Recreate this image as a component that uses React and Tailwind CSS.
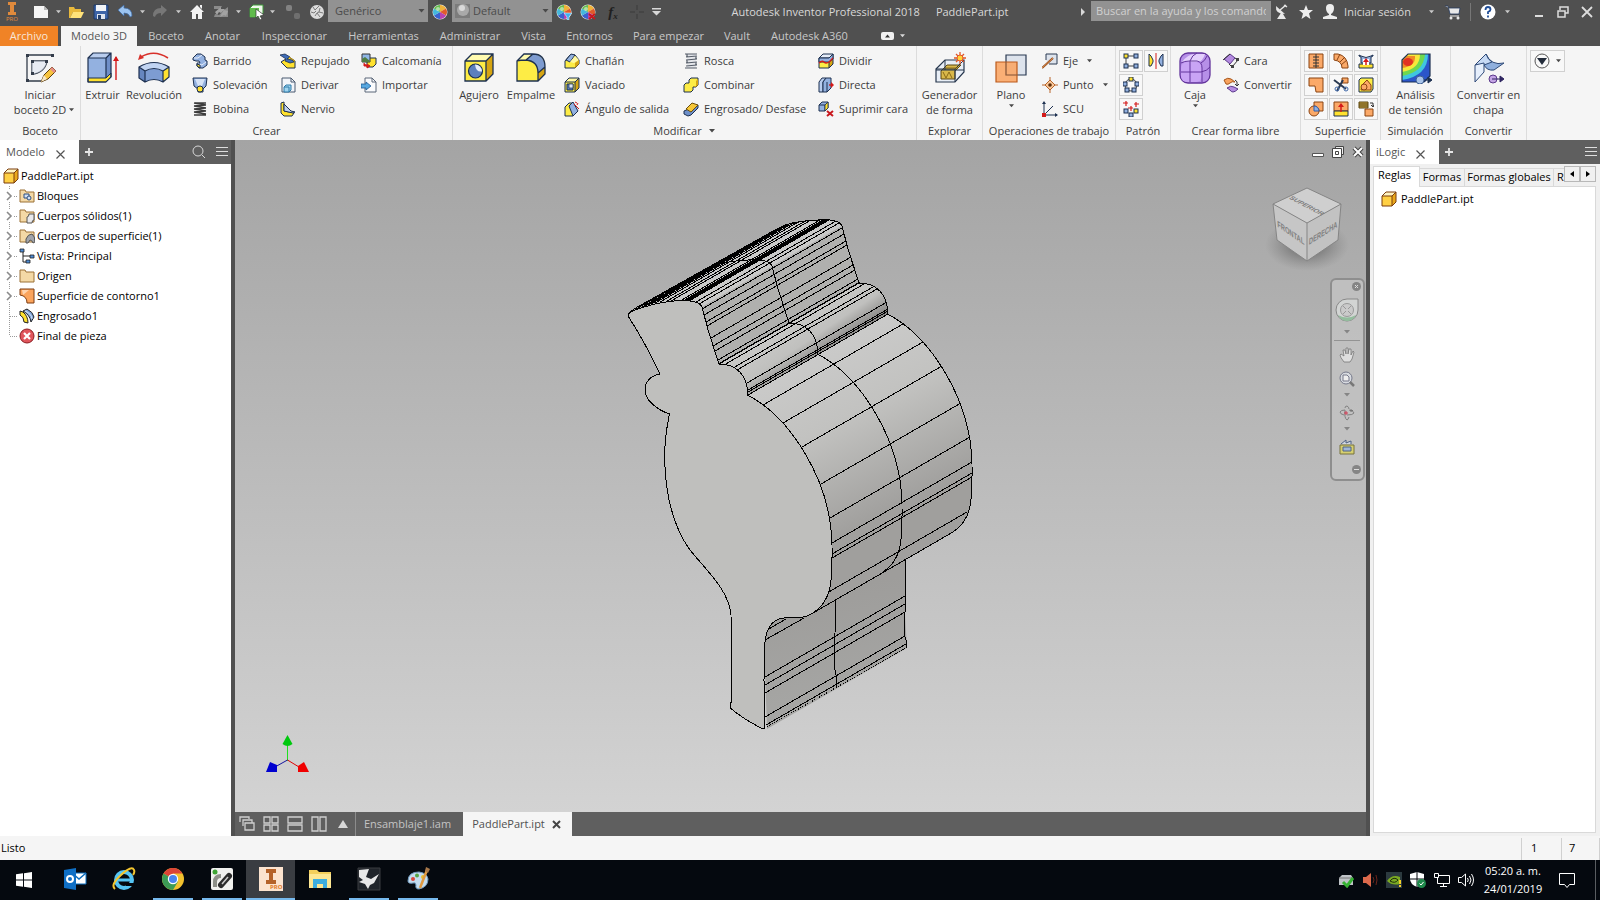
const NAVY = "#1d3050";
const BLUE = "#93b1e0";
const YEL = "#ffe12e";
const ORG = "#fba968";
const BRN = "#8a4413";

const Svg = ({ s = 16, w, h, vb, children, className = "" }) => (
    <svg width={w || s} height={h || s} viewBox={vb || `0 0 ${w || s} ${h || s}`} fill="none" className={`block shrink-0 ${className}`} aria-hidden="true">
        {children}
    </svg>
);

const Caret = ({ color = "#4a4a4a", w = 6 }) => (
    <Svg w={w} h={4} vb="0 0 6 4">
        <path d="M0 0h6L3 3.6z" fill={color} />
    </Svg>
);

/* ---------- ribbon icons, 32px ---------- */
const big = {
    sketch: (
        <Svg s={32}>
            <path d="M3 3h26M3 3v26M3 29h16" stroke="#333c4a" strokeWidth="1.3" />
            <path d="M8 9h15M8 9v13c7 0 14-5 15-13" stroke="#333c4a" strokeWidth="1.3" />
            <path d="M8 22c7 0 14-5 15-13H8z" fill="#dfe6f1" opacity=".6" />
            <path d="M2 2h3v3H2zM27 2h3v3h-3zM2 27h3v3H2zM7 8h3v3H7zM21 8h3v3h-3zM7 20h3v3H7z" fill="#333c4a" />
            <path d="M17 30l3-7 8-8 4 4-8 8z" fill="#f7c33d" stroke="#5a3c10" />
            <path d="M17 30l3-7 3 4z" fill="#f7e6c4" />
            <path d="M26 17l4 4 2-2-4-4z" fill="#e58e86" />
        </Svg>
    ),
    extrude: (
        <Svg s={32}>
            <path d="M1 6l5-5h18l-5 5v20H1z" fill="#b9cdee" />
            <path d="M1 6h18v21H1z" fill={BLUE} />
            <path d="M19 6l5-5v21l-5 5z" fill="#6f8fc8" />
            <path d="M1 26h18l5-5v4l-5 5H1z" fill={YEL} stroke={NAVY} />
            <path d="M1 6l5-5h18v24l-5 5H1zM1 6h18v20M19 6l5-5" stroke={NAVY} strokeWidth="1.2" />
            <path d="M29 28V5" stroke="#d41a1a" strokeWidth="1.4" />
            <path d="M26 9l3-5 3 5z" fill="#d41a1a" />
        </Svg>
    ),
    revolve: (
        <Svg s={32}>
            <path d="M3 5Q16-3 30 6" stroke="#d8302a" strokeWidth="1.6" />
            <path d="M0 8l2-6 4 4z" fill="#d8302a" />
            <path d="M1 15Q16 6 31 15l-6 4Q16 14 7 19z" fill="#c1d4f2" />
            <path d="M1 15l6 4v11l-6-4z" fill="#6686c0" />
            <path d="M7 19Q16 14 25 19v11Q16 25 7 30z" fill="#7d9cd2" />
            <path d="M25 19l6-4v10l-6 5z" fill={YEL} />
            <path d="M1 15Q16 6 31 15v10l-6 5Q16 25 7 30l-6-4zM1 15l6 4Q16 14 25 19l6-4M7 19v11M25 19v11" stroke={NAVY} strokeWidth="1.2" />
        </Svg>
    ),
    hole: (
        <Svg s={32}>
            <path d="M2 9l7-7h21l-7 7z" fill="#fffbb0" />
            <path d="M23 9l7-7v20l-7 7z" fill="#d6a512" />
            <path d="M2 9h21v20H2z" fill="#fdec45" />
            <path d="M2 9l7-7h21v20l-7 7H2zM2 9h21v20M23 9l7-7" stroke={NAVY} strokeWidth="1.3" />
            <circle cx="12.500" cy="19" r="7" fill="#5c80bd" stroke={NAVY} strokeWidth="1.2" />
            <path d="M12 12.500a7 7 0 017 7q-6 1-7-7z" fill="#e7eefa" />
        </Svg>
    ),
    fillet: (
        <Svg s={32}>
            <path d="M2 9l7-7h11q10 2 10 13v7l-7 7H2z" fill="#fdec45" />
            <path d="M2 9l7-7h8l-7 7z" fill="#fffbb0" />
            <path d="M11 8l7-6q11 1 12 13l-7 6Q23 9 11 8z" fill="#7d9bd0" />
            <path d="M23 21l7-6v7l-7 7z" fill="#d6a512" />
            <path d="M2 9l7-7h9q12 0 12 13v7l-7 7H2zM2 9q3-1 9-1M11 8l7-6M11 8q12 1 12 13v8M23 21l7-6" stroke={NAVY} strokeWidth="1.3" />
        </Svg>
    ),
    shape: (
        <Svg s={32}>
            <path d="M2 17l9-9h19v12l-9 10H2z" fill="#e8eef6" stroke="#26364d" strokeWidth="1.2" />
            <path d="M7 19l6-6h14l-6 6v8H7z" fill="#d9b84a" stroke="#5b4712" />
            <path d="M2 17h19v13M21 17l9-9M11 8v10H2M11 18h19" stroke="#26364d" />
            <path d="M9 20l3 6 3-6 3 6M12 16h12" stroke="#8a6a16" />
            <path d="M26 0v12M20 6h12M22 2l8 8M30 2l-8 8" stroke="#e2562a" strokeWidth="1.3" />
            <circle cx="26" cy="6" r="3" fill="#ffd23a" stroke="#e2562a" />
        </Svg>
    ),
    plane: (
        <Svg s={32}>
            <path d="M11 3h20v20H11z" fill="#dde3ec" stroke="#2b3a52" strokeWidth="1.2" />
            <path d="M1 10h21v20H1z" fill="#fba563" fillOpacity=".88" stroke="#bb5a1c" strokeWidth="1.2" />
            <path d="M11 10v13h11" stroke="#8c5a3c" strokeWidth="1.2" />
        </Svg>
    ),
    box: (
        <Svg s={32}>
            <rect x="1" y="1" width="30" height="30" rx="8" fill="#b690e8" stroke="#63349c" strokeWidth="1.3" />
            <rect x="2" y="10" width="21" height="20" rx="6" fill="#c9a4f5" />
            <path d="M3 10q6-8 13-8h10q-2 7-7 8z" fill="#e3cffc" />
            <path d="M2 11q3-2 9-2h7q5 1 5 7v14M11 9v21M2 20h20q6-1 9-5M11 9q2-6 7-8M22 11q4-2 6-7" stroke="#63349c" />
        </Svg>
    ),
    stress: (
        <Svg s={32}>
            <path d="M2 8l6-6h22v22l-5 6H2z" fill="#2b55c9" />
            <path d="M2 8l6-6h20q0 22-26 26z" fill="#3fc6e0" />
            <path d="M2 8l6-6h17Q24 20 2 24z" fill="#6fd84e" />
            <path d="M2 8l6-6h12Q20 17 2 20z" fill="#f8e83a" />
            <path d="M2 9l5-5h8Q16 14 2 16z" fill="#f08a26" />
            <ellipse cx="8" cy="10" rx="5" ry="4" fill="#e23222" />
            <path d="M2 8l6-6h22v22l-6 6H2z" stroke={NAVY} strokeWidth="1.2" />
            <circle cx="20" cy="28" r="4" fill="#a9c4ea" stroke="#3e5f92" />
            <path d="M24 28h6M28 25l4 3-4 3z" stroke={NAVY} fill={NAVY} />
        </Svg>
    ),
    sheet: (
        <Svg s={32}>
            <path d="M13 2Q18 14 31 11L21 18q-7 1-10-5z" fill="#8fafdd" stroke="#2f4a78" />
            <path d="M2 13L13 2q2 6 6 8l-8 3z" fill="#c7daf4" stroke="#2f4a78" />
            <path d="M2 13v17l9-10v-9z" fill="#e6effc" stroke="#2f4a78" />
            <circle cx="20" cy="27" r="4" fill="#c3a4e4" stroke="#5c3a8c" />
            <path d="M19 27h10M27 24l4 3-4 3z" stroke="#2f2560" fill="#2f2560" />
        </Svg>
    ),
};

/* ---------- ribbon icons, 16px ---------- */
const Cube = ({ f = "#fdec45", t = "#fff8a0", r = "#d6a512", st = NAVY }) => (
    <>
        <path d="M1 5l4-4h10l-4 4z" fill={t} />
        <path d="M11 5l4-4v10l-4 4z" fill={r} />
        <path d="M1 5h10v10H1z" fill={f} />
        <path d="M1 5l4-4h10v10l-4 4H1zM1 5h10v10M11 5l4-4" stroke={st} />
    </>
);

const small = {
    sweep: (
        <Svg>
            <path d="M1 5l4-4h4l4 3v3l2 1v4l-4 3H7l-2-2v-3h3l-1-2H4L1 7z" fill={BLUE} stroke={NAVY} />
            <path d="M2 5h4l4-3M6 11l4 1 4-3" stroke="#e7eefa" />
            <path d="M5 11l3 1v3l-3-2z" fill={YEL} stroke={NAVY} />
        </Svg>
    ),
    loft: (
        <Svg>
            <path d="M1 1h14l-1 8-3 3v3H6v-3L2 9z" fill={BLUE} stroke={NAVY} />
            <path d="M3 2h10l-3 7H6z" fill="#d5e2f6" />
            <circle cx="8" cy="12" r="3" fill={YEL} stroke={NAVY} />
        </Svg>
    ),
    coil: (
        <Svg>
            <path d="M2 2l12 2M2 5l12 2M2 8l12 2M2 11l12 2M2 14h12M3 2h11M14 4L2 5M14 7L2 8M14 10L2 11" stroke="#3c3c3c" strokeWidth="1.3" />
        </Svg>
    ),
    emboss: (
        <Svg>
            <path d="M1 9l6 6h8V8L9 4z" fill={YEL} stroke={NAVY} />
            <path d="M0 2l5-1 5 3-3 2 5 1 2 2-4 1-5-2 1-2z" fill="#3e6cb8" stroke={NAVY} strokeWidth=".8" />
            <path d="M9 4l6 4" stroke="#c8990c" />
        </Svg>
    ),
    derive: (
        <Svg>
            <path d="M2 1h9l4 4v10H2z" fill="#f1f4f9" stroke="#4b5a70" />
            <path d="M11 1v4h4" stroke="#4b5a70" />
            <path d="M4 10l2-2h5v5l-2 2H4z" fill="#9fd4ef" stroke="#2f7ba8" />
            <path d="M4 10h5v5" stroke="#2f7ba8" />
        </Svg>
    ),
    rib: (
        <Svg>
            <path d="M1 2l3-1v9l10 2-2 3H4l-3-3z" fill={YEL} stroke={NAVY} />
            <path d="M4 3l7 7 4 1-2 1-9-2z" fill="#bdd0ef" stroke={NAVY} />
        </Svg>
    ),
    decal: (
        <Svg>
            <path d="M6 8l3-3h6v6l-3 3H6z" fill={YEL} stroke={NAVY} />
            <path d="M1 1h8v8H1z" fill="#8fb6e6" stroke="#333" />
            <path d="M1 9V6l3-2 5 4v1z" fill="#4e7d41" />
            <path d="M3 10v3h4M6 11l3 2-3 2z" stroke="#d41a1a" fill="#d41a1a" />
        </Svg>
    ),
    importer: (
        <Svg>
            <path d="M4 1h7l4 4v10H4z" fill="#fafbfd" stroke="#5b6678" />
            <path d="M11 1v4h4" stroke="#5b6678" />
            <path d="M0 7h5V5l5 4-5 4v-2H0z" fill="#58a8e0" stroke="#1d5b94" strokeWidth=".8" />
        </Svg>
    ),
    chamfer: (
        <Svg>
            <path d="M1 8l5-6h5l4 5v4l-4 4H1z" fill="#fdec45" stroke={NAVY} />
            <path d="M2 7l5-6 4 1-5 7z" fill={BLUE} stroke={NAVY} />
            <path d="M6 9l5-6 4 4-5 3z" fill="#fff8a0" />
            <path d="M11 10l4-3v4l-4 4z" fill="#d6a512" />
        </Svg>
    ),
    shell: (
        <Svg>
            <Cube />
            <path d="M3 7h6v6H3z" fill="#5c80bd" stroke={NAVY} />
            <path d="M5 7h4v4H5z" fill="#dfe9f8" stroke={NAVY} strokeWidth=".7" />
        </Svg>
    ),
    draft: (
        <Svg>
            <path d="M1 6l4-4h3l5 9-4 4H1z" fill="#fdec45" stroke={NAVY} />
            <path d="M5 5l4-4 5 9-5 5z" fill={BLUE} stroke={NAVY} />
            <path d="M10 3l5 5M11 1l2 1M13 4l1-2" stroke="#d41a1a" />
        </Svg>
    ),
    thread: (
        <Svg>
            <path d="M4 1h9v14H4z" fill="#e4e6ea" />
            <path d="M2 1h12M3 4l11-1M3 7l11-1M3 10l11-1M3 13l11-1M2 15h12M4 1v3M13 3v3M4 7v3M13 9v3" stroke="#555d68" strokeWidth="1.2" />
        </Svg>
    ),
    combine: (
        <Svg>
            <path d="M6 3l2-2h7v7l-2 2h-3v3l-2 2H1V8l2-2h3z" fill="#fdec45" stroke={NAVY} />
            <path d="M10 10l3 0 2-2V2l-2 2v5z" fill="#d6a512" />
        </Svg>
    ),
    thicken: (
        <Svg>
            <path d="M1 10l7-3 7-3v3l-7 7-3 1-4-2z" fill="#6d8fc9" stroke={NAVY} />
            <path d="M3 8l6-6 6 2-7 7z" fill="#f6c737" stroke="#6b4d0a" />
        </Svg>
    ),
    split: (
        <Svg>
            <Cube t="#e5ecf8" />
            <path d="M1 5h10l4-4v5l-4 3H1z" fill={BLUE} stroke={NAVY} />
            <path d="M1 10q3-3 5-1t5 0l4-4" stroke="#d41a1a" strokeWidth="1.3" />
        </Svg>
    ),
    direct: (
        <Svg>
            <path d="M1 5l3-4h4l-3 4v10H1z" fill="#b9cdee" stroke={NAVY} />
            <path d="M5 5l3-4h5v10l-4 4H5z" fill={BLUE} stroke={NAVY} />
            <path d="M9 5v10" stroke={NAVY} />
            <path d="M11 8h3" stroke="#d41a1a" strokeWidth="1.4" />
            <path d="M13 5l3 3-3 3z" fill="#d41a1a" />
        </Svg>
    ),
    delFace: (
        <Svg>
            <path d="M1 4l3-3h6v6l-3 3H1z" fill={BLUE} stroke={NAVY} />
            <path d="M1 4h6v6M7 4l3-3" stroke={NAVY} />
            <path d="M7 4l3-3v6l-3 3z" fill={YEL} stroke={NAVY} strokeWidth=".8" />
            <path d="M9 10l6 5M15 10l-6 5" stroke="#c8181e" strokeWidth="2" />
        </Svg>
    ),
    axis: (
        <Svg>
            <path d="M4 1h11v10H7L4 7z" fill="#dde3ec" />
            <path d="M4 7V1h11v10H7" stroke="#2b3a52" />
            <path d="M0 15L11 5" stroke="#8a4413" strokeWidth="2" />
            <path d="M0 15L11 5" stroke="#f0a060" strokeWidth=".8" />
        </Svg>
    ),
    point: (
        <Svg>
            <path d="M8 0v16M0 8h16" stroke="#b8652a" />
            <path d="M8 3l5 5-5 5-5-5z" fill="#f8c79a" stroke="#b8652a" />
            <circle cx="8" cy="8" r="1.800" fill="#5b2a08" />
        </Svg>
    ),
    ucs: (
        <Svg>
            <path d="M2 14V2M2 14h13M2 14l9-9" stroke={NAVY} />
            <path d="M0 3l2-3 2 3zM13 12l3 2-3 2z" fill={NAVY} />
            <path d="M0 12h4v4H0z" fill="#d41a1a" />
        </Svg>
    ),
    face: (
        <Svg>
            <path d="M1 6l6-5 5 4-5 6z" fill="#b48ae0" stroke="#5c3a8c" />
            <path d="M0 7l7-6M12 5l3 2-6 7-3-3" stroke="#333" />
            <path d="M8 12h3v3H8zM13 5h3v3h-3z" fill="#444" />
        </Svg>
    ),
    convertF: (
        <Svg>
            <path d="M1 3q4-3 7-1t4 3q-3-1-5 1t-4 1z" fill="#f8a35e" stroke="#a75418" />
            <path d="M4 11q4-3 7-1l4 2q-3 3-5 3t-3-2z" fill="#b48ae0" stroke="#5c3a8c" />
            <path d="M12 3q3 1 2 5M12 7l2 2 2-2" stroke="#333" />
        </Svg>
    ),
};

const Node = ({ x, y, f = BLUE }) => <rect x={x} y={y} width="4" height="4" fill={f} stroke={NAVY} />;

const grid = {
    rect: (
        <Svg>
            <path d="M3 3h10M3 3v10M3 13h10" stroke="#444" />
            <Node x={1} y={1} f={YEL} /><Node x={11} y={1} /><Node x={1} y={11} /><Node x={11} y={11} />
        </Svg>
    ),
    mirror: (
        <Svg>
            <path d="M1 1v12h2l2-4V7L3 3z" fill={YEL} stroke={NAVY} />
            <path d="M15 1v12h-2l-2-4V7l2-4z" fill={BLUE} stroke={NAVY} />
            <path d="M8 0v16" stroke="#d41a1a" />
        </Svg>
    ),
    circ: (
        <Svg>
            <circle cx="8" cy="8" r="6" stroke="#444" />
            <Node x={6} y={0} f={YEL} /><Node x={0} y={5} /><Node x={12} y={5} /><Node x={2} y={11} /><Node x={9} y={11} />
        </Svg>
    ),
    sketchPat: (
        <Svg>
            <path d="M3 0v5M0 2h5M13 1v5M11 3h5M8 5v5M5 7h5" stroke="#d41a1a" strokeWidth="1.2" />
            <Node x={1} y={8} /><Node x={11} y={8} f={YEL} /><Node x={6} y={12} />
        </Svg>
    ),
    stitch: (
        <Svg>
            <path d="M1 1h14v14H1z" fill={ORG} stroke={BRN} />
            <path d="M8 1v14M5 4h6M5 7h6M5 10h6M5 13h6" stroke="#333" />
        </Svg>
    ),
    ruled: (
        <Svg>
            <path d="M1 1h4q9 2 10 12v2H9Q9 8 1 7z" fill={ORG} stroke={BRN} />
            <path d="M4 7l3-6M7 9l5-5M8 12l6-5" stroke={BRN} />
        </Svg>
    ),
    replace: (
        <Svg>
            <path d="M1 2l2 1q5 3 10 0l2-1v1l-2 1v6H3V4L1 3z" fill={BLUE} stroke={NAVY} />
            <path d="M1 11h14v4H1z" fill={YEL} stroke={NAVY} />
            <path d="M5 6h6v6H5z" fill="#fff" />
            <path d="M8 12V7" stroke="#d41a1a" strokeWidth="1.5" /><path d="M5 9l3-4 3 4z" fill="#d41a1a" />
        </Svg>
    ),
    patch: (
        <Svg>
            <path d="M1 1h14v14H8l-1-6H1z" fill={ORG} stroke={BRN} />
        </Svg>
    ),
    trim: (
        <Svg>
            <path d="M9 1h6v5H9z" fill={ORG} stroke={BRN} />
            <path d="M1 3l12 9M4 14l6-11" stroke="#2b3a52" strokeWidth="2" />
            <circle cx="4" cy="12" r="2" stroke="#3f68a8" /><circle cx="13" cy="12" r="2" stroke="#3f68a8" />
        </Svg>
    ),
    sculpt: (
        <Svg>
            <path d="M1 3l2-2h12v11l-2 3H1z" fill="#fdec45" stroke={NAVY} />
            <path d="M4 8l5-5 4 5v5H3z" fill={ORG} stroke={BRN} /><circle cx="6" cy="10" r="3" fill={ORG} stroke={BRN} />
        </Svg>
    ),
    extend: (
        <Svg>
            <path d="M6 1h9v9H6z" fill={ORG} stroke={BRN} />
            <circle cx="6" cy="10" r="5" fill={ORG} stroke={BRN} />
            <path d="M6 5a5 5 0 015 5H6z" fill={BLUE} stroke="#2f5fae" />
        </Svg>
    ),
    thickOff: (
        <Svg>
            <path d="M1 1h14v9H1z" fill={ORG} stroke={BRN} />
            <path d="M1 10h14v5H1z" fill={YEL} stroke={NAVY} />
            <path d="M8 11V4" stroke="#d41a1a" strokeWidth="1.5" /><path d="M5 6l3-4 3 4z" fill="#d41a1a" />
        </Svg>
    ),
    repair: (
        <Svg>
            <path d="M1 1h9v6H1z" fill="#c6a243" stroke="#5b4712" />
            <path d="M1 3h9M1 5h9" stroke="#5b4712" />
            <path d="M7 8h8v7H7z" fill={ORG} stroke={BRN} />
            <path d="M12 2h3v4M13 4l2 2 1-2" stroke="#333" />
        </Svg>
    ),
};

const PartIcon = () => (
    <Svg>
        <Cube f="#ffd044" t="#fff4c2" r="#e9a81c" st="#7a3d0c" />
    </Svg>
);

/* ---------- title bar ---------- */
const Ball = ({ children }) => (
    <Svg>
        <circle cx="8" cy="8" r="7.500" fill="#e9e9e9" />
        <path d="M8 8V1a7 7 0 016 3.500z" fill="#f0b23a" /><path d="M8 8l6-3.500a7 7 0 010 7z" fill="#e25b2b" />
        <path d="M8 8l6 3.500A7 7 0 018 15z" fill="#b743b0" /><path d="M8 8v7a7 7 0 01-6-3.500z" fill="#3a62cf" />
        <path d="M8 8l-6 3.500a7 7 0 010-7z" fill="#44b8dc" /><path d="M8 8L2 4.500A7 7 0 018 1z" fill="#66bd4e" />
        <circle cx="6" cy="5" r="2" fill="#fff" opacity=".5" />
        {children}
    </Svg>
);

const qat = [
    { id: "Nuevo", c: "ml-2 w-[18px]", i: <Svg><path d="M1 2h10l4 4v8H1z" fill="#f6f6f6" /><path d="M11 2v4h4z" fill="#b8b8b8" /></Svg> },
    { id: "Más nuevos", c: "w-4", caret: true },
    { id: "Abrir", c: "w-5", i: <Svg><path d="M1 3h5l1 2h6v3H5l-3 6H1z" fill="#e9b93c" /><path d="M5 8h11l-3 6H2z" fill="#ffe27a" /></Svg> },
    { id: "Guardar", c: "ml-[5px] w-5", i: <Svg><path d="M1 1h14v14H1z" fill="#3e65a8" stroke="#1d3866" /><path d="M3 1h10v6H3z" fill="#f2f4f7" /><path d="M4 10h8v5H4z" fill="#e1e6ee" /><path d="M5 11h3v4H5z" fill="#24406f" /></Svg> },
    { id: "Deshacer", c: "ml-1 w-5", i: <Svg><path d="M1 6l6-5v3q8 0 8 8l-2 1q-1-4-6-4v3z" fill="#9cc4f0" stroke="#3e6aa6" strokeWidth=".7" /></Svg> },
    { id: "Lista deshacer", c: "w-[14px]", caret: true },
    { id: "Rehacer", c: "ml-px w-5", i: <Svg><path d="M15 6l-6-5v3Q1 4 1 12l2 1q1-4 6-4v3z" fill="#777" /></Svg> },
    { id: "Lista rehacer", c: "ml-px w-[14px]", caret: true },
    { id: "Inicio", c: "ml-[2px] w-5", i: <Svg><path d="M8 1l7 7h-2v7h-4v-5H7v5H3V8H1z" fill="#f3f3f3" /><path d="M11 1h2v4l-2-2z" fill="#f3f3f3" /></Svg> },
    { id: "Actualizar", c: "ml-1 w-5", i: <Svg><path d="M1 2h8l-2 3H1zM15 3v10H1l1-3 4 1 5-5 4-3z" fill="#8b8b8b" /><path d="M2 8l6-5v2h4l-4 4-2-1-2 3zM9 9l2-3 4 1-2 5-2-1-4 2z" fill="#a2a2a2" /></Svg> },
    { id: "Más actualizar", c: "w-[14px]", caret: true },
    { id: "Seleccionar", c: "ml-[2px] w-5", i: <Svg><path d="M1 4l3-3h10v8l-3 4H1z" fill="#eef7ea" stroke="#3f9b3a" /><path d="M1 4h9v9H1z" fill="#5fbb4b" /><path d="M7 5l8 6-4 1 2 3-2 1-2-4-2 2z" fill="#fff" stroke="#333" strokeWidth=".7" /></Svg> },
    { id: "Más seleccionar", c: "-ml-0.5 w-[14px]", caret: true },
    { id: "Componentes", c: "ml-[4px] w-5", i: <Svg><rect x="1" y="1" width="6" height="6" rx="2" fill="#828282" /><rect x="9" y="9" width="6" height="6" rx="2" fill="#6f6f6f" /></Svg> },
    { id: "Material", c: "ml-1 w-5", i: <Svg><circle cx="8" cy="8" r="7" fill="#dcdcdc" /><path d="M4 3l2 3 4-4M2 8l3 1 2-2M11 4l-1 4 4 1M6 12l2-3 3 4M8 9l2-1" stroke="#7b7b7b" /></Svg> },
];

const Combo = ({ label, value, className, children }) => (
    <label className={`relative -mt-[2px] flex h-[22px] w-[100px] items-center bg-[#929292] ${className}`}>
        {children}
        <select aria-label={label} className="h-full w-full min-w-0 appearance-none bg-transparent text-[11px] text-[#4b4b4b] outline-none">
            <option>{value}</option>
        </select>
        <span className="pointer-events-none absolute right-[3px]"><Caret w={7} /></span>
    </label>
);

const IconBtn = ({ label, className = "", children }) => (
    <button aria-label={label} className={`flex shrink-0 items-center justify-center ${className}`}>{children}</button>
);

const TitleBar = () => (
    <header className="flex h-[26px] shrink-0 items-center overflow-hidden bg-[#505050] pb-[2px] text-[11px] text-[#d8d8d8]">
        <IconBtn label="Inventor" className="w-6 flex-col text-[6px] leading-[6px] text-[#e08a3c]">
            <Svg w={10} h={13}><path d="M1 0h8v3H7v7h2v3H1v-3h2V3H1z" fill="#e08a3c" /></Svg>
            <span className="mt-px">PRO</span>
        </IconBtn>
        {qat.map((b) => (
            <IconBtn key={b.id} label={b.id} className={b.c}>{b.caret ? <Caret color="#c9c9c9" w={5} /> : b.i}</IconBtn>
        ))}
        <Combo label="Material" value="Genérico" className="ml-px pl-[7px]" />
        <IconBtn label="Aspecto" className="ml-[2px] w-5"><Ball /></IconBtn>
        <Combo label="Aspecto" value="Default" className="ml-[2px] gap-[2px] pl-[3px]">
            <Svg><path d="M0 1h15v14H0z" fill="#7c7c7c" /><circle cx="8" cy="7" r="6" fill="#a9a9a9" /><circle cx="7" cy="5" r="3" fill="#dadada" /></Svg>
        </Combo>
        <IconBtn label="Ajustar" className="ml-[2px] w-5"><Ball><path d="M8 9h8l-3 4v3h-2v-3z" fill="#3db4f2" stroke="#fff" strokeWidth=".5" /></Ball></IconBtn>
        <IconBtn label="Borrar" className="ml-[4px] w-5"><Ball><path d="M9 10l6 5M15 10l-6 5" stroke="#c8181e" strokeWidth="2" /></Ball></IconBtn>
        <IconBtn label="Parámetros" className="ml-[5px] w-5">
            <span className="font-['Liberation_Serif'] text-[15px] font-bold text-[#1f1f1f] italic">f<sub className="text-[9px]">x</sub></span>
        </IconBtn>
        <IconBtn label="Medir" className="ml-1 w-5"><Svg><path d="M8 1v5M8 10v5M1 8h5M10 8h5" stroke="#3b3b3b" /></Svg></IconBtn>
        <IconBtn label="Personalizar" className="w-[18px]"><Svg w={9} h={8}><path d="M0 0h9v1.500H0zM0 3h9L4.500 7.500z" fill="#d8d8d8" /></Svg></IconBtn>
        <div className="flex min-w-0 flex-1 justify-center gap-4 whitespace-nowrap">
            <span>Autodesk Inventor Professional 2018</span>
            <span>PaddlePart.ipt</span>
        </div>
        <IconBtn label="Expandir" className="w-4"><Svg w={4} h={8}><path d="M0 0l4 4-4 4z" fill="#d8d8d8" /></Svg></IconBtn>
        <input
            aria-label="Buscar en la ayuda"
            placeholder="Buscar en la ayuda y los comandos"
            className="-mt-[3px] h-5 w-[180px] bg-[#929292] px-[5px] text-[11px] text-[#d8d8d8] outline-none placeholder:text-[#d0d0d0]"
        />
        <IconBtn label="Comunicación" className="w-[22px]"><Svg><path d="M2 2q-1 8 9 8zM7 9l-4 6h9l-3-5" fill="#e8e8e8" /><path d="M6 6l6-5M10 1l3 2" stroke="#e8e8e8" strokeWidth="1.500" /></Svg></IconBtn>
        <IconBtn label="Favoritos" className="w-[26px]"><Svg><path d="M8 1l2 5h5l-4 3.500 1.500 5.500L8 12l-4.500 3L5 9.500 1 6h5z" fill="#ededed" /></Svg></IconBtn>
        <button className="flex items-center gap-[6px] pl-[3px] whitespace-nowrap">
            <Svg><path d="M8 0q4 0 4 4 0 4-3 6v1l6 2v2H1v-2l6-2v-1Q4 8 4 4q0-4 4-4z" fill="#ededed" /></Svg>
            Iniciar sesión
            <span className="ml-3"><Caret color="#c9c9c9" w={5} /></span>
        </button>
        <IconBtn label="Tienda" className="ml-[5px] w-7"><Svg><path d="M0 2h3l2 8h9l1-6H4" fill="#e8e8e8" stroke="#23395e" strokeWidth=".8" /><path d="M5 12h9" stroke="#e8e8e8" /><circle cx="6" cy="14" r="1.500" fill="#e8e8e8" /><circle cx="13" cy="14" r="1.500" fill="#e8e8e8" /></Svg></IconBtn>
        <span className="ml-[3px] h-[18px] w-px bg-[#777]" />
        <IconBtn label="Ayuda" className="ml-[5px] w-6">
            <Svg><circle cx="8" cy="8" r="7.500" fill="#fff" /><path d="M5.500 6q0-3 2.500-3t2.500 2.500Q10.500 7 8 8v2M8 11.500v2" stroke="#1f4d96" strokeWidth="1.800" /></Svg>
        </IconBtn>
        <IconBtn label="Más ayuda" className="w-[14px]"><Caret color="#c9c9c9" w={5} /></IconBtn>
        <IconBtn label="Minimizar" className="ml-[13px] w-6"><Svg w={8} h={10}><path d="M0 8h8v2H0z" fill="#ddd" /></Svg></IconBtn>
        <IconBtn label="Restaurar" className="w-6"><Svg w={12} h={12}><path d="M3 4V1h8v6H8M1 5h7v6H1z" stroke="#ddd" strokeWidth="1.500" /></Svg></IconBtn>
        <IconBtn label="Cerrar" className="mr-px w-6"><Svg w={12} h={12}><path d="M1 1l10 10M11 1L1 11" stroke="#ddd" strokeWidth="1.800" /></Svg></IconBtn>
    </header>
);

/* ---------- ribbon ---------- */
const tabs = [
    ["Boceto", "w-[56px]"],
    ["Anotar", "w-[57px]"],
    ["Inspeccionar", "w-[87px]"],
    ["Herramientas", "w-[91px]"],
    ["Administrar", "w-[82px]"],
    ["Vista", "w-[45px]"],
    ["Entornos", "w-[67px]"],
    ["Para empezar", "w-[91px]"],
    ["Vault", "w-[46px]"],
    ["Autodesk A360", "w-[99px]"],
];

const Tabs = () => (
    <nav className="flex h-5 shrink-0 items-stretch bg-[#505050] text-[11px] whitespace-nowrap text-[#c8c8c8]">
        <button className="w-[58px] bg-[#f08326] text-[#f8e6d6]">Archivo</button>
        <button className="mr-px ml-[3px] w-[76px] bg-[#f5f5f5] text-[#555]">Modelo 3D</button>
        {tabs.map(([t, w]) => (
            <button key={t} className={w}>{t}</button>
        ))}
        <button aria-label="Minimizar cinta" className="ml-[22px] flex items-center gap-[6px]">
            <Svg w={13} h={8}><rect width="13" height="8" rx="2" fill="#f0f0f0" /><path d="M4 5.500h5L6.500 2.500z" fill="#333" /></Svg>
            <Caret color="#d8d8d8" w={5} />
        </button>
    </nav>
);

const Panel = ({ title, className, more, children }) => (
    <section className={`flex shrink-0 flex-col border-r border-[#dcdcdc] pt-[3px] ${className}`}>
        <div className="flex h-[72px]">{children}</div>
        <h2 className="flex h-[19px] items-center justify-center gap-[6px] pt-px whitespace-nowrap">
            {title}
            {more && <Caret w={8} />}
        </h2>
    </section>
);

const Big = ({ icon, lines, className, caret }) => (
    <button className={`flex shrink-0 flex-col items-center pt-[3px] leading-[15px] whitespace-nowrap ${className}`}>
        <span className="mb-[3px]">{big[icon]}</span>
        {lines.map((l) => <span key={l}>{l}</span>)}
        {caret && <span className="mt-[2px]"><Caret w={5} /></span>}
    </button>
);

const Col = ({ items, className = "" }) => (
    <div className={`flex shrink-0 flex-col ${className}`}>
        {items.map(([icon, label, caret]) => (
            <button key={label} className="flex h-6 items-center gap-[5px] whitespace-nowrap">
                {small[icon]}
                {label}
                {caret && <span className="ml-1"><Caret w={5} /></span>}
            </button>
        ))}
    </div>
);

const IconGrid = ({ items, className }) => (
    <div className={`grid content-start gap-x-px gap-y-[2px] pt-px ${className}`}>
        {items.map((n) => (
            <button key={n} aria-label={n} className="flex h-[22px] w-6 items-center justify-center border border-[#d0d0d0] bg-[#f8f8f8]">
                {grid[n]}
            </button>
        ))}
    </div>
);

const Ribbon = () => (
    <div className="flex shrink-0 overflow-hidden bg-[#f5f5f5] text-[11px] text-[#3c3c3c]">
        <Panel title="Boceto" className="w-[81px]">
            <button className="flex w-full flex-col items-center pt-[3px] leading-[15px]">
                <span className="mb-[3px]">{big.sketch}</span>
                <span>Iniciar</span>
                <span className="flex items-center gap-[3px] pl-2 whitespace-nowrap">boceto 2D<Caret w={5} /></span>
            </button>
        </Panel>
        <Panel title="Crear" className="w-[372px]">
            <Big icon="extrude" lines={["Extruir"]} className="w-[43px]" />
            <Big icon="revolve" lines={["Revolución"]} className="w-[60px]" />
            <Col className="ml-2 w-[88px]" items={[["sweep", "Barrido"], ["loft", "Solevación"], ["coil", "Bobina"]]} />
            <Col className="w-[81px]" items={[["emboss", "Repujado"], ["derive", "Derivar"], ["rib", "Nervio"]]} />
            <Col items={[["decal", "Calcomanía"], ["importer", "Importar"]]} />
        </Panel>
        <Panel title="Modificar" more className="w-[464px]">
            <Big icon="hole" lines={["Agujero"]} className="w-[52px]" />
            <Big icon="fillet" lines={["Empalme"]} className="w-[52px]" />
            <Col className="ml-[7px] w-[119px]" items={[["chamfer", "Chaflán"], ["shell", "Vaciado"], ["draft", "Ángulo de salida"]]} />
            <Col className="w-[135px]" items={[["thread", "Rosca"], ["combine", "Combinar"], ["thicken", "Engrosado/ Desfase"]]} />
            <Col items={[["split", "Dividir"], ["direct", "Directa"], ["delFace", "Suprimir cara"]]} />
        </Panel>
        <Panel title="Explorar" className="w-[66px]">
            <Big icon="shape" lines={["Generador", "de forma"]} className="w-full" />
        </Panel>
        <Panel title="Operaciones de trabajo" className="w-[133px]">
            <Big icon="plane" lines={["Plano"]} caret className="w-14" />
            <Col className="ml-[3px]" items={[["axis", "Eje", true], ["point", "Punto", true], ["ucs", "SCU"]]} />
        </Panel>
        <Panel title="Patrón" className="w-[55px]">
            <div className="flex gap-px pl-[3px]">
                <IconGrid className="grid-cols-1" items={["rect", "circ", "sketchPat"]} />
                <IconGrid className="grid-cols-1" items={["mirror"]} />
            </div>
        </Panel>
        <Panel title="Crear forma libre" className="w-[130px]">
            <Big icon="box" lines={["Caja"]} caret className="w-12" />
            <Col className="ml-1" items={[["face", "Cara"], ["convertF", "Convertir"]]} />
        </Panel>
        <Panel title="Superficie" className="w-20">
            <IconGrid className="ml-[3px] grid-cols-3" items={["stitch", "ruled", "replace", "patch", "trim", "sculpt", "extend", "thickOff", "repair"]} />
        </Panel>
        <Panel title="Simulación" className="w-[70px]">
            <Big icon="stress" lines={["Análisis", "de tensión"]} className="w-full" />
        </Panel>
        <Panel title="Convertir" className="w-[76px]">
            <Big icon="sheet" lines={["Convertir en", "chapa"]} className="w-full" />
        </Panel>
        <button aria-label="Mostrar paneles" className="mt-1 ml-[3px] flex h-[22px] w-[35px] items-center justify-center gap-[6px] border border-[#d0d0d0] bg-[#f8f8f8]">
            <Svg><circle cx="8" cy="8" r="7" stroke="#555" /><path d="M3 5h10l-5 7z" fill="#222b3a" /></Svg>
            <Caret w={5} />
        </button>
    </div>
);

/* ---------- side panels ---------- */
const PanelHeader = ({ title, className, search }) => (
    <div className="flex h-6 shrink-0 items-stretch bg-[#5f5f5f] text-[11px]">
        <div className={`flex items-center justify-between bg-white pr-[14px] pl-[6px] text-[#555] ${className}`}>
            {title}
            <button aria-label={`Cerrar ${title}`} className="mt-1"><Svg w={9} h={9}><path d="M.5.5l8 8M8.500.5l-8 8" stroke="#555" strokeWidth="1.200" /></Svg></button>
        </div>
        <IconBtn label="Añadir" className="w-5"><Svg w={8} h={8}><path d="M4 0v8M0 4h8" stroke="#e6e6e6" strokeWidth="1.800" /></Svg></IconBtn>
        <span className="flex-1" />
        {search && <IconBtn label="Buscar" className="mr-1 w-5"><Svg w={14} h={14}><circle cx="6" cy="6" r="5" stroke="#d8d8d8" /><path d="M10 10l3 3" stroke="#d8d8d8" /></Svg></IconBtn>}
        <IconBtn label="Menú" className="w-[18px]"><Svg w={12} h={10}><path d="M0 .5h12M0 4.500h12M0 8.500h12" stroke="#dedede" /></Svg></IconBtn>
    </div>
);

const Folder = ({ children }) => (
    <Svg>
        <path d="M1 2h5l1 2h8v10H1z" fill="#f4d9a6" stroke="#9a7136" />
        {children}
    </Svg>
);

const tree = [
    ["Bloques", <Folder><path d="M5 6h5v4H5z" fill="#cfe0f6" stroke="#2d4f80" /><circle cx="10" cy="10" r="2" fill="#cfe0f6" stroke="#2d4f80" /></Folder>, true],
    ["Cuerpos sólidos(1)", <Folder><path d="M8 9q2 0 2-3h5v6q-2 0-2 3H8z" fill="#e9e9ec" stroke="#555" /></Folder>, true],
    ["Cuerpos de superficie(1)", <Folder><path d="M7 15V11q2-5 6-5 3 2 3 8l-2 1q-1-3-3-3l-2 3z" fill="#a2a5ab" stroke="#555" /></Folder>, true],
    ["Vista: Principal", <Svg><path d="M4 3v11h4M4 8h8" stroke="#222" /><path d="M1 1h4v3H1zM11 7h4v3h-4zM7 12h4v3H7z" fill="#4f8dd6" stroke="#222" strokeWidth=".8" /></Svg>, true],
    ["Origen", <Folder />, true],
    ["Superficie de contorno1", <Svg><path d="M1 1h14v14H8q0-7-7-8z" fill="#fba45c" stroke="#7c3d12" /><path d="M3 2h7l-6 5z" fill="#ffd3ac" /></Svg>, true],
    ["Engrosado1", <Svg><path d="M1 3l3 1q5 4 5 11l-4-1Q5 9 1 7z" fill={YEL} stroke="#222" /><path d="M4 3l4-2q6 3 7 8l-3 5Q11 7 4 3z" fill="#7fa4d8" stroke="#222" /><path d="M6 3q7 3 7 8" stroke="#dbe7f8" /></Svg>],
    ["Final de pieza", <Svg><circle cx="8" cy="8" r="7" fill="#e0555c" stroke="#8c1c20" /><path d="M5 5l6 6M11 5l-6 6" stroke="#fff" strokeWidth="2.200" /></Svg>],
];

const ModelPanel = () => (
    <aside className="flex w-[231px] shrink-0 flex-col bg-white">
        <PanelHeader title="Modelo" className="w-[79px]" search />
        <ul className="pt-[2px] text-[11px] text-black">
            <li className="flex h-5 items-center gap-[2px] pl-[3px]"><PartIcon />PaddlePart.ipt</li>
            {tree.map(([label, icon, open], i) => (
                <li key={label} className="flex h-5 items-center whitespace-nowrap">
                    <span className="flex h-full w-[19px] items-center">
                        <Svg w={19} h={20}>
                            <path d={i === tree.length - 1 ? "M9.500 0v10" : "M9.500 0v20"} stroke="#9a9a9a" strokeDasharray="1 1" />
                            <path d="M10 10.500h8" stroke="#9a9a9a" strokeDasharray="1 1" />
                            {open && <path d="M5 4h9v12H5z" fill="#fff" />}
                            {open && <path d="M7 6l4 4-4 4" stroke="#8a8a8a" strokeWidth="1.600" />}
                        </Svg>
                    </span>
                    {icon}
                    <span className="ml-[2px]">{label}</span>
                </li>
            ))}
        </ul>
    </aside>
);

const ILogicPanel = () => (
    <aside className="flex w-[230px] shrink-0 flex-col bg-[#f0f0f0] text-[11px] text-black">
        <PanelHeader title="iLogic" className="w-[69px]" />
        <div className="mr-1 ml-[3px] flex h-[22px] items-end pt-[2px] whitespace-nowrap">
            <button className="z-10 -mb-px h-[21px] w-[47px] shrink-0 border border-b-0 border-[#d9d9d9] bg-white pr-1 pb-1">Reglas</button>
            <button className="h-[18px] w-[45px] shrink-0 border-t border-r border-[#d9d9d9]">Formas</button>
            <button className="h-[18px] w-[89px] shrink-0 border-t border-r border-[#d9d9d9]">Formas globales</button>
            <button className="h-[18px] min-w-0 flex-1 border-t border-[#d9d9d9] pl-[3px] text-left">R</button>
            <button aria-label="Anterior" className="flex h-4 w-4 shrink-0 items-center justify-center self-start border border-[#b8b8b8] bg-[#f0f0f0]"><Svg w={4} h={6}><path d="M4 0v6L0 3z" fill="#000" /></Svg></button>
            <button aria-label="Siguiente" className="flex h-4 w-4 shrink-0 items-center justify-center self-start border border-[#b8b8b8] bg-[#f0f0f0]"><Svg w={4} h={6}><path d="M0 0v6l4-3z" fill="#000" /></Svg></button>
        </div>
        <div className="mr-1 mb-[3px] ml-[3px] flex-1 border border-[#d9d9d9] bg-white">
            <div className="flex items-center gap-1 pt-[4px] pl-[7px]"><PartIcon />PaddlePart.ipt</div>
        </div>
    </aside>
);

/* ---------- 3D part ---------- */
const DX = 140;
const DY = -81;

const FACE =
    "M628 316Q629 311 641 308Q668 299 690 301Q700 302 702 307L708 330L719 364C735 364 748 374 747.500 395" +
    "C790 417 831 480 832 545C832 575 834 600 813 613C803 620 793 617 784 618C772 619 766 629 765 642L764 680L765 728H761" +
    "Q740 717 730.500 708L732 692L731 615C729 590 706 570 690 550C666 517 659 461 669.500 414C655 409 645 399 645 390C645 380 653 375 660 374Q645 342 628 316Z";

/* right-hand profiles, reused for the middle and the far section */
const PROFILE = "M650 305Q670 300 690 301Q700 302 702 307L708 330L719 364C735 364 748 374 747.500 395C790 417 831 480 832 545C832 575 834 600 813 613";

const topLines = [[641, 308], [645, 306], [648, 305], [651, 304], [655, 303], [660, 302], [667, 301], [671, 301], [680, 301], [683, 301], [685, 301], [687, 301], [689, 301], [696, 302], [699, 304]];
const sideLines = [[702, 309], [704, 315], [706, 322], [707, 326], [711, 338], [713, 346], [715, 351], [718, 360]];
const bumpLines = [[719, 364], [720, 363], [724, 365], [733, 368], [737, 370], [747, 383], [748, 390], [748, 392], [748, 395]];
const bodyLines = [[763, 405], [783, 423], [802, 447], [821, 484], [830, 518], [832, 543], [832, 554], [832, 558], [827, 593], [813, 613]];
const legLines = [[765, 677], [765, 685], [765, 693], [765, 717], [766, 725]];

const Lines = ({ pts }) => pts.map(([x, y]) => <path key={`${x}-${y}`} d={`M${x} ${y}l${DX} ${DY}`} />);

const Part = () => (
    <svg viewBox="235 140 1131 672" className="block h-full w-full" fill="none" role="img" aria-label="PaddlePart">
        <defs>
            <linearGradient id="body" gradientUnits="userSpaceOnUse" x1="817" y1="355" x2="895" y2="510">
                <stop offset="0" stopColor="#cacac9" />
                <stop offset=".4" stopColor="#c2c2c0" />
                <stop offset="1" stopColor="#a09f9d" />
            </linearGradient>
            <linearGradient id="bump" gradientUnits="userSpaceOnUse" x1="790" y1="323" x2="815" y2="360">
                <stop offset="0" stopColor="#c9c9c7" />
                <stop offset=".55" stopColor="#c0c0be" />
                <stop offset="1" stopColor="#898886" />
            </linearGradient>
            <linearGradient id="leg" gradientUnits="userSpaceOnUse" x1="830" y1="590" x2="850" y2="690">
                <stop offset="0" stopColor="#9e9d9b" />
                <stop offset="1" stopColor="#a5a5a3" />
            </linearGradient>
        </defs>
        <path d="M628 316L780 227Q800 219 830 220Q841 221 842 226L702 307L650 310z" fill="#c9c9c8" />
        <path d="M702 307L842 226L859 283L719 364z" fill="#b0b0ae" />
        <path d="M719 364L859 283C875 283 888 293 887.500 314L747.500 395C748 374 735 364 719 364z" fill="url(#bump)" />
        <path d="M747.500 395L887.500 314C930 336 971 399 972 464C972 494 974 519 953 532L813 613L740 560z" fill="url(#body)" />
        <path d="M764 645L770 615L813 613L905 559L905 615L907 648L767 729z" fill="url(#leg)" />
        <g stroke="#000" strokeWidth="1" shapeRendering="crispEdges">
            <path d="M628 315Q631 310 641 305L775 230Q785 224 797 222M636 309L779 228M642 307L786 225M650 301L770 234M660 298L772 233" />
            <Lines pts={topLines} />
            <Lines pts={sideLines} />
            <Lines pts={bumpLines} />
            <Lines pts={bodyLines} />
            <Lines pts={legLines} />
            <path d="M765 640L804 618M767 630L786 619" />
            <path d="M767 727l140-80" strokeDasharray="1 1" />
            <path d="M905 559V612L904.500 635L906 640V647M835.500 600L834.500 668L836 675V688" />
            <path d={PROFILE} transform="translate(140 -81)" />
            <path d={PROFILE} transform="translate(70 -41)" />
            <path d={FACE} fill="#bfbfbd" />
        </g>
    </svg>
);

const ViewCube = () => (
    <Svg w={84} h={92} vb="-4 0 84 92">
        <defs>
            <radialGradient id="shade">
                <stop offset=".4" stopColor="#777" stopOpacity=".8" />
                <stop offset="1" stopColor="#888" stopOpacity="0" />
            </radialGradient>
        </defs>
        <ellipse cx="38" cy="61" rx="42" ry="26" fill="url(#shade)" />
        <path d="M38 4L72 20L38 39L4 20z" fill="#cfcfcf" />
        <path d="M4 20L38 39V77L8 56z" fill="#c6c6c6" />
        <path d="M72 20L38 39V77L69 56z" fill="#c2c2c2" />
        <path d="M4 20L38 4L72 20L69 56L38 77L8 56zM4 20L38 39L72 20M38 39V77" stroke="#858585" />
        <g fill="#7f7f7f" fontSize="9" fontWeight="700" fontFamily="Liberation Sans" textAnchor="middle">
            <text transform="matrix(.7 .37 -.62 .4 36 23)">SUPERIOR</text>
            <text transform="matrix(.64 .44 .06 1 22 52)">FRONTAL</text>
            <text transform="matrix(.64 -.4 -.05 1 54 52)">DERECHA</text>
        </g>
    </Svg>
);

const NavBar = () => (
    <div className="flex w-[35px] flex-col items-center rounded-md border-2 border-[#8e8e8e] bg-[#c3c3c3]/80 pr-px pb-[2px]">
        <IconBtn label="Cerrar barra" className="h-3 self-end pr-px"><Svg w={9} h={9}><circle cx="4.500" cy="4.500" r="4.500" fill="#858585" /><path d="M3 3l3 3M6 3L3 6" stroke="#ddd" /></Svg></IconBtn>
        <IconBtn label="Rueda de navegación" className="h-9">
            <Svg s={24}>
                <path d="M12 1h11v11a11 11 0 11-11-11z" fill="#d2d4d3" stroke="#888" />
                <path d="M3 17q9 5 18 0-3 6-9 6t-9-6z" fill="#93bd9d" />
                <circle cx="12" cy="12" r="6.500" fill="#cacaca" stroke="#999" />
                <path d="M8 8l3 3M16 8l-3 3M8 16l3-3M16 16l-3-3" stroke="#999" />
            </Svg>
        </IconBtn>
        <span className="flex h-2 items-center"><Caret color="#858585" /></span>
        <span className="mt-1 h-px w-[26px] bg-[#939393]" />
        <IconBtn label="Encuadre" className="h-7">
            <Svg><path d="M5 15Q1 10 1 8l1-1 3 2-1-6h2l1 4V1h2v6l1-5h2v6l2-4 1 1-2 7-2 3z" fill="#dedede" stroke="#777" strokeWidth=".8" /></Svg>
        </IconBtn>
        <IconBtn label="Zoom" className="h-5">
            <Svg><circle cx="7" cy="7" r="6" fill="#d8dbe0" stroke="#76798a" /><path d="M4 4h4l2 2v4H4z" fill="#eee" stroke="#76798a" /><path d="M11 11l4 4" stroke="#777" strokeWidth="2.500" /></Svg>
        </IconBtn>
        <span className="flex h-3 items-center"><Caret color="#858585" /></span>
        <IconBtn label="Órbita" className="h-6">
            <Svg><path d="M5 10q-4-1-4-3 1-2 5-2M10 5q5 1 5 3-1 2-7 2M6 3q0-2 2-2 2 1 2 3M10 12q-1 3-2 3-3-2-2-10" stroke="#808080" /><path d="M7 6v4M5 8h4" stroke="#d03a52" /><path d="M12 4v3M11 5.500h3" stroke="#777" /></Svg>
        </IconBtn>
        <span className="flex h-2 items-center"><Caret color="#858585" /></span>
        <IconBtn label="Mirar a" className="h-7">
            <Svg><path d="M2 5l5-4v3l5-2v3" stroke="#4f6384" fill="#d0d6e0" /><path d="M1 6h14v9H1z" fill="#d6cf70" stroke="#77733d" /><path d="M4 8h8v4H4z" fill="#9fb6d6" stroke="#4f6384" /></Svg>
        </IconBtn>
        <IconBtn label="Opciones" className="h-4 self-end pr-px"><Svg w={9} h={9}><circle cx="4.500" cy="4.500" r="4.500" fill="#858585" /><path d="M2 4.500h5" stroke="#ddd" /></Svg></IconBtn>
    </div>
);

const Viewport = () => (
    <main className="flex min-w-0 flex-1 flex-col border-x-4 border-[#505050]">
        <div className="relative min-h-0 flex-1 bg-linear-to-b from-[#a4a4a4] to-[#d3d3d3]">
            <Part />
            <div className="absolute top-[6px] right-[2px] flex items-center gap-2">
                <IconBtn label="Minimizar vista"><Svg w={12} h={12}><path d="M.5 7.500h11v3H.5z" fill="#fff" stroke="#555" /></Svg></IconBtn>
                <IconBtn label="Restaurar vista"><Svg w={12} h={12}><path d="M3.500.5h8v8h-8z" fill="#eee" stroke="#444" /><path d="M.5 2.500h9v9h-9z" fill="#fff" stroke="#444" /><path d="M3.500 5.500h3v3h-3z" stroke="#444" /></Svg></IconBtn>
                <IconBtn label="Cerrar vista"><Svg w={12} h={12}><path d="M2 2l8 8M10 2l-8 8" stroke="#444" strokeWidth="4" /><path d="M2 2l8 8M10 2l-8 8" stroke="#fff" strokeWidth="2" /></Svg></IconBtn>
            </div>
            <div className="absolute top-11 right-[17px]"><ViewCube /></div>
            <div className="absolute top-[138px] right-px"><NavBar /></div>
            <div className="absolute bottom-[37px] left-[30px]">
                <Svg w={46} h={42}>
                    <path d="M22.500 28V10" stroke="#1fe01f" /><path d="M22.500 27L10 34" stroke="#1414a0" /><path d="M22.500 27L34 34" stroke="#e00000" />
                    <path d="M22.500 2l5 9q-5 4-10 0z" fill="#00c80e" />
                    <path d="M1 39l4-10 7 3v7z" fill="#0000d0" />
                    <path d="M44 39l-5-10-6 4v6z" fill="#f00000" />
                </Svg>
            </div>
        </div>
        <div className="flex h-6 shrink-0 items-stretch bg-[#5f5f5f] text-[11px] whitespace-nowrap">
            <IconBtn label="Cascada" className="ml-1 w-4"><Svg><path d="M1 6V1h9v2M4 10V4h9v3M6 7h9v7H6z" stroke="#cfcfcf" strokeWidth="1.300" /></Svg></IconBtn>
            <IconBtn label="Mosaico" className="ml-2 w-4"><Svg><path d="M1 1h6v6H1zM9 1h6v6H9zM1 9h6v6H1zM9 9h6v6H9z" stroke="#cfcfcf" strokeWidth="1.300" /></Svg></IconBtn>
            <IconBtn label="Horizontal" className="ml-2 w-4"><Svg><path d="M1 1h14v6H1zM1 9h14v6H1z" stroke="#cfcfcf" strokeWidth="1.300" /></Svg></IconBtn>
            <IconBtn label="Vertical" className="ml-2 w-4"><Svg><path d="M1 1h6v14H1zM9 1h6v14H9z" stroke="#cfcfcf" strokeWidth="1.300" /></Svg></IconBtn>
            <IconBtn label="Subir" className="ml-2 w-4"><Svg w={10} h={8}><path d="M0 8h10L5 0z" fill="#d8d8d8" /></Svg></IconBtn>
            <button className="ml-1 w-[108px] border-l border-[#8c8c8c] pr-1 text-[#c4c4c4]">Ensamblaje1.iam</button>
            <div className="flex w-[109px] items-center justify-center gap-[7px] bg-[#f5f5f5] pr-[2px] text-[#505050]">
                <button>PaddlePart.ipt</button>
                <IconBtn label="Cerrar PaddlePart.ipt"><Svg w={9} h={9}><path d="M1 1l7 7M8 1L1 8" stroke="#444" strokeWidth="2" /></Svg></IconBtn>
            </div>
        </div>
    </main>
);

/* ---------- status bar and taskbar ---------- */
const StatusBar = () => (
    <footer className="flex h-6 shrink-0 items-center bg-[#f5f5f5] pt-px pl-px text-[11px] text-black">
        Listo
        <span className="flex-1" />
        <span className="flex h-[22px] w-10 items-center border-l border-[#d0d0d0] pl-[9px]">1</span>
        <span className="flex h-[22px] w-[39px] items-center border-x border-[#d0d0d0] pl-[7px]">7</span>
    </footer>
);

const apps = [
    ["Outlook", <Svg s={24}><path d="M9 6h14v11H9z" fill="#fff" stroke="#0b6cbd" /><path d="M9 6l7 6 7-6" stroke="#0b6cbd" strokeWidth="1.500" /><path d="M1 3l12-2v22L1 21z" fill="#0f6fc5" /><circle cx="7" cy="12" r="3" stroke="#fff" strokeWidth="2" /></Svg>],
    ["Internet Explorer", <Svg s={24}><circle cx="12" cy="13" r="8" stroke="#55c4f3" strokeWidth="4" /><path d="M5 13h15" stroke="#55c4f3" strokeWidth="3" /><path d="M14 16h9v3h-9z" fill="#05080d" /><path d="M3 22Q-2 18 9 8T22 3q1 2-1 5" stroke="#f3c52f" strokeWidth="2" /></Svg>],
    ["Chrome", <Svg s={24}><circle cx="12" cy="12" r="11" fill="#f2c12e" /><path d="M12 12L2.500 6.500A11 11 0 0121.500 6.500H12z" fill="#dc4437" /><path d="M2.500 6.500A11 11 0 0012 23l5-8.500-5-2.500z" fill="#3c9b55" /><circle cx="12" cy="12" r="5.200" fill="#fff" /><circle cx="12" cy="12" r="4" fill="#4a84ee" /></Svg>, true],
    ["RoboDK", <Svg s={24}><rect x="1" y="1" width="22" height="22" rx="2" fill="#f1f1ef" /><circle cx="5" cy="5" r="2.500" fill="#3fa535" /><path d="M5 20v-5q0-6 6-6" stroke="#8d8f88" strokeWidth="4" /><path d="M11 18L19 9" stroke="#2b2b2b" strokeWidth="6" strokeLinecap="round" /><path d="M12 17l6-7" stroke="#ccc" strokeWidth="1.500" /></Svg>, true],
    ["Inventor", <span className="flex h-6 w-6 flex-col items-end bg-[#fbe3cf] text-[6px] leading-[6px] font-bold text-[#e07a28]"><Svg w={24} h={17}><path d="M7 2h10v4h-3v7h3v4H7v-4h3V6H7z" fill="#b4622a" /></Svg>PRO</span>, true, true],
    ["Explorador", <Svg s={24}><path d="M1 3h8l2 2h12v16H1z" fill="#f3cf5c" /><path d="M1 7h22v14H1z" fill="#fde793" /><path d="M5 12h14v9h-4v-4H9v4H5z" fill="#3daee0" /></Svg>],
    ["Rhinoceros", <Svg s={24}><path d="M1 1h22v22H1z" fill="#20242a" stroke="#3a3d40" /><path d="M2 3l10-1-3 8 5 2 8-5-5 9-4 2-2 4-3-5-6-2 4-2-4-3z" fill="#e8e8e8" /></Svg>, true],
    ["Paint", <Svg s={24}><path d="M2 14Q2 5 13 5q8 1 9 7 0 8-9 10-4 0-3-4 0-3-3-2-5 1-5-2z" fill="#c5dcef" stroke="#6f9abf" /><circle cx="7" cy="12" r="2" fill="#d8463a" /><circle cx="11" cy="8.500" r="2" fill="#56a547" /><circle cx="17" cy="10" r="2" fill="#e6c12e" /><path d="M14 21L21 3" stroke="#e09a42" strokeWidth="2.500" /><path d="M19 4l1-4 4 2-2 4z" fill="#a8784a" /></Svg>, true],
];

const Taskbar = () => (
    <footer className="flex h-10 shrink-0 items-stretch bg-[#05090f] text-white">
        <IconBtn label="Inicio de Windows" className="w-[50px] pr-[2px]">
            <Svg><path d="M0 2.300L7 1.300V7.500H0zM8 1.200L16 0v7.500H8zM0 8.500h7v6.200l-7-1zM8 8.500h8V16l-8-1.200z" fill="#fff" /></Svg>
        </IconBtn>
        {apps.map(([name, icon, running, active]) => (
            <button key={name} aria-label={name} className={`flex w-[49px] flex-col items-center ${active ? "bg-[#3a3d42]" : ""}`}>
                <span className="flex flex-1 items-center">{icon}</span>
                <span className={`h-[2px] ${active ? "w-full" : "w-10"} ${running ? "bg-[#76b9ed]" : ""}`} />
            </button>
        ))}
        <span className="flex-1" />
        <div className="flex items-center gap-2">
            <IconBtn label="Impresora"><Svg><path d="M1 6l3-3h9l2 3v7H1z" fill="#bfc3c7" /><path d="M1 6h14" stroke="#777" /><path d="M5 10l4 4 6-8" stroke="#36b233" strokeWidth="3" /></Svg></IconBtn>
            <IconBtn label="Audio"><Svg><path d="M1 5h3l5-4v14l-5-4H1z" fill="#dd6a4c" /><path d="M11 5q2 3 0 6M14 3q2 5 0 10" stroke="#6b241a" /></Svg></IconBtn>
            <IconBtn label="NVIDIA"><Svg><path d="M0 0h16v16H0z" fill="#2c3a3f" /><path d="M1 9q5-7 13-4v7q-8 2-13-3z" fill="#7aa922" /><path d="M4 9q4-5 8-1-3 4-8 1z" stroke="#1f2c0c" /><path d="M13 8h2v4h-2zM13 13h2v2h-2z" fill="#f3d029" /></Svg></IconBtn>
            <IconBtn label="Seguridad"><Svg><path d="M7 0l7 2v5q0 5-7 8Q0 12 0 7V2z" fill="#fff" /><path d="M7 0v15M0 7h14" stroke="#05090f" /><circle cx="11.500" cy="11.500" r="4.500" fill="#1f8a4c" /><path d="M9.500 11.500l1.500 1.500 2.500-3" stroke="#fff" /></Svg></IconBtn>
            <IconBtn label="Red"><Svg><path d="M3.500 3.500h12v8h-12zM9.500 11.500v3M6 14.500h7" stroke="#fff" /><path d="M.5 1.500h4v4h-4z" fill="#05090f" stroke="#fff" /></Svg></IconBtn>
            <IconBtn label="Volumen"><Svg><path d="M.5 5.500h3l4-3.500v12l-4-3.500h-3z" stroke="#fff" /><path d="M9.500 6q1.500 2 0 4M11.500 4q3 4 0 8M13.500 2q4 6 0 12" stroke="#fff" /></Svg></IconBtn>
        </div>
        <div className="ml-[9px] flex w-[60px] flex-col items-center justify-center text-[11px] leading-[18px] whitespace-nowrap">
            <span>05:20 a. m.</span>
            <span>24/01/2019</span>
        </div>
        <IconBtn label="Notificaciones" className="mx-4 w-4"><Svg><path d="M.5 1.500h15v11h-5L8 15.500l-2.500-3h-5z" stroke="#fff" /></Svg></IconBtn>
        <span className="mr-1 ml-1 border-l border-[#5a5d61]" />
    </footer>
);

const App = () => (
    <div className="flex h-screen flex-col overflow-hidden bg-[#505050] font-['Open_Sans','Noto_Sans',sans-serif]">
        <TitleBar />
        <Tabs />
        <Ribbon />
        <div className="flex min-h-0 flex-1">
            <ModelPanel />
            <Viewport />
            <ILogicPanel />
        </div>
        <StatusBar />
        <Taskbar />
    </div>
);

export default App;
